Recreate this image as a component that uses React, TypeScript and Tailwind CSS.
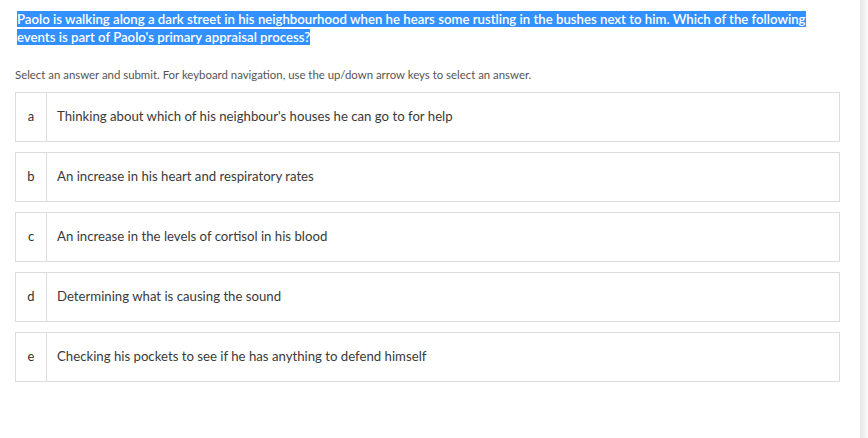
import React from "react";

const options = [
  { k: "a", t: "Thinking about which of his neighbour's houses he can go to for help" },
  { k: "b", t: "An increase in his heart and respiratory rates" },
  { k: "c", t: "An increase in the levels of cortisol in his blood" },
  { k: "d", t: "Determining what is causing the sound" },
  { k: "e", t: "Checking his pockets to see if he has anything to defend himself" },
];

export default function App() {
  return (
    <div className="flex w-[868px] h-[438px] bg-white overflow-hidden" style={{ fontFamily: "Lato, 'Open Sans', sans-serif" }}>
      <div className="w-[860px] flex flex-col">
        <div className="pl-[17px] pt-[11px] pr-[30px] text-[13.2px] leading-[17.5px] font-semibold">
          <span className="bg-[#3390ff] text-white box-decoration-clone">
            Paolo is walking along a dark street in his neighbourhood when he hears some rustling in the bushes next to him. Which of the following events is part of Paolo's primary appraisal process?
          </span>
        </div>
        <div className="pl-[15px] mt-[21px] text-[11.4px] leading-[16px] text-[#555]">
          Select an answer and submit. For keyboard navigation, use the up/down arrow keys to select an answer.
        </div>
        <div className="ml-[15px] w-[825px] mt-[9px] flex flex-col gap-[10px]">
          {options.map((o) => (
            <div key={o.k} className="flex h-[50px] border border-[#dcdcdc] bg-white">
              <div className="w-[31px] shrink-0 border-r border-[#dcdcdc] flex items-center justify-center text-[13px] text-[#333]">
                {o.k}
              </div>
              <div className="flex items-center pl-[10px] text-[13.2px] text-[#3a3a3a]">{o.t}</div>
            </div>
          ))}
        </div>
      </div>
      <div className="w-[8px] h-full bg-gradient-to-r from-[#e6e6e6] to-[#fafafa]" />
    </div>
  );
}
